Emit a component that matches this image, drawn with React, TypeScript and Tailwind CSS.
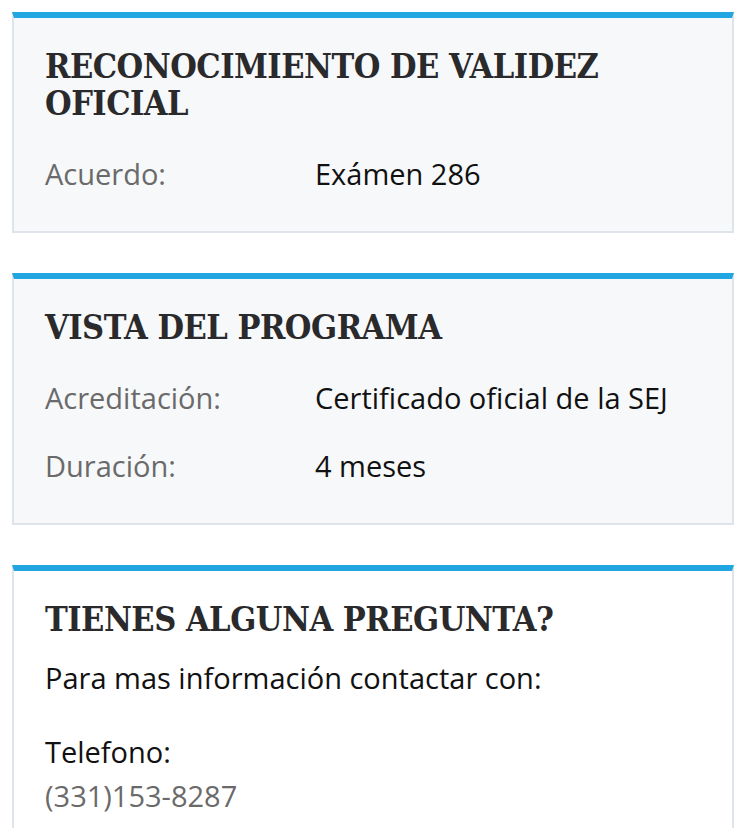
import React from 'react';

type Row = { label: string; value: string };

const headingFont = "font-['DejaVu_Serif_Condensed','DejaVu_Serif',serif] font-bold [font-stretch:condensed]";
const bodyFont = "font-['Open_Sans',sans-serif]";

const InfoCard: React.FC<{ title: React.ReactNode; rows: Row[] }> = ({ title, rows }) => (
  <div className="border-2 border-t-[6px] border-[#dfe4ea] border-t-[#22a6e1] bg-[#f7f8fa] px-[31px] pt-[30px] pb-[37px]">
    <h2 className={`${headingFont} text-[34px] leading-[37px] text-[#2a2a2c] tracking-[-0.5px]`}>{title}</h2>
    <div className="mt-[32px] flex flex-col gap-[28px]">
      {rows.map(r => (
        <div key={r.label} className={`${bodyFont} flex text-[29px] leading-[40px]`}>
          <span className="w-[270px] shrink-0 text-[#6a6a6a]">{r.label}</span>
          <span className="text-[#111]">{r.value}</span>
        </div>
      ))}
    </div>
  </div>
);

export default function App() {
  return (
    <div className="min-h-[828px] bg-white px-[12px] pt-[12px] flex flex-col gap-[40px]">
      <InfoCard
        title={<>RECONOCIMIENTO DE VALIDEZ<br />OFICIAL</>}
        rows={[{ label: 'Acuerdo:', value: 'Exámen 286' }]}
      />
      <InfoCard
        title="VISTA DEL PROGRAMA"
        rows={[
          { label: 'Acreditación:', value: 'Certificado oficial de la SEJ' },
          { label: 'Duración:', value: '4 meses' },
        ]}
      />
      <div className="border-2 border-t-[6px] border-[#dfe4ea] border-t-[#22a6e1] bg-white px-[31px] pt-[30px] pb-[30px]">
        <h2 className={`${headingFont} text-[34px] leading-[37px] text-[#2a2a2c] tracking-[-0.5px]`}>TIENES ALGUNA PREGUNTA?</h2>
        <div className={`${bodyFont} mt-[20px] text-[29px] leading-[40px] text-[#111]`}>
          <p>Para mas información contactar con:</p>
          <p className="mt-[34px]">Telefono:</p>
          <p className="mt-[4px] text-[#6a6a6a]">(331)153-8287</p>
        </div>
      </div>
    </div>
  );
}
